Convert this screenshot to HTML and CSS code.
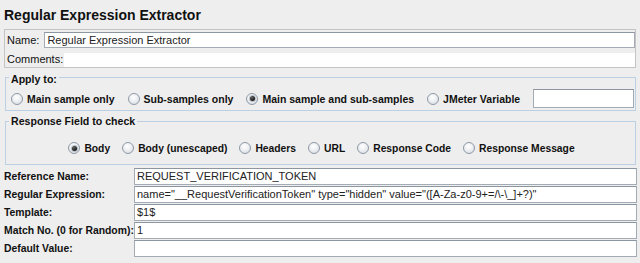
FILE: index.html
```html
<!DOCTYPE html>
<html>
<head>
<meta charset="utf-8">
<link rel="stylesheet" href="styles.css">
</head>
<body>
<div class="title">Regular Expression Extractor</div>
<div class="nc">
  <div class="row name"><span class="lbl">Name:</span><div class="field">Regular Expression Extractor</div></div>
  <div class="row comments"><span class="lbl">Comments:</span><div class="area"></div></div>
</div>
<fieldset class="group apply">
  <legend>Apply to:</legend>
  <div class="radios">
    <label class="rb"><i></i>Main sample only</label>
    <label class="rb"><i></i>Sub-samples only</label>
    <label class="rb"><i class="on"></i>Main sample and sub-samples</label>
    <label class="rb"><i></i>JMeter Variable</label>
    <div class="field var"></div>
  </div>
</fieldset>
<fieldset class="group resp">
  <legend>Response Field to check</legend>
  <div class="radios center">
    <label class="rb"><i class="on"></i>Body</label>
    <label class="rb"><i></i>Body (unescaped)</label>
    <label class="rb"><i></i>Headers</label>
    <label class="rb"><i></i>URL</label>
    <label class="rb"><i></i>Response Code</label>
    <label class="rb"><i></i>Response Message</label>
  </div>
</fieldset>
<div class="form">
  <span class="flbl">Reference Name:</span><div class="field">REQUEST_VERIFICATION_TOKEN</div>
  <span class="flbl">Regular Expression:</span><div class="field">name="__RequestVerificationToken" type="hidden" value="([A-Za-z0-9+=/\-\_]+?)"</div>
  <span class="flbl">Template:</span><div class="field">$1$</div>
  <span class="flbl">Match No. (0 for Random):</span><div class="field">1</div>
  <span class="flbl">Default Value:</span><div class="field"></div>
</div>
</body>
</html>
```
FILE: styles.css
```css
* { box-sizing: border-box; }
html, body { margin: 0; padding: 0; }
body {
  background: #eeeeee;
  width: 640px;
  height: 263px;
  overflow: hidden;
  font-family: "Liberation Sans", Arial, sans-serif;
  color: #111;
}
.title {
  font-weight: bold;
  font-size: 14px;
  line-height: 18px;
  height: 29px;
  padding: 6px 0 0 4px;
  color: #111;
}
.nc {
  margin: 0 4px;
  border: 1px solid #c4c4c4;
}
.row { display: flex; }
.lbl { font-size: 11px; white-space: nowrap; }
.name { height: 20px; padding-top: 2px; padding-left: 1px; }
.name .lbl { line-height: 16px; padding-left: 1px; }
.name .field { margin-left: 5px; height: 16px; }
.comments { height: 17px; padding-left: 2px; }
.comments .lbl { line-height: 18px; }
.comments .area { flex: 1; margin-top: 3px; height: 14px; background: #fff; margin-left: 1px; }
.field {
  flex: 1;
  background: #fff;
  border: 1px solid #a3abb5;
  border-top-color: #8c96a1;
  font-size: 11px;
  line-height: 15px;
  padding-left: 2px;
  color: #222;
  white-space: nowrap;
  overflow: hidden;
}
.group {
  margin: 0 4px 0 5px;
  padding: 0;
  border: 1px solid #bcd0e4;
  min-width: 0;
}
.group legend {
  margin-left: 3px;
  padding: 0 2px;
  font-weight: bold;
  font-size: 10.6px;
  line-height: 13px;
}
.apply legend { padding-top: 5px; }
.apply .radios { height: 21px; margin: 2px 0 1px; padding-left: 5px; gap: 13px; }
.apply .rb { font-size: 10.5px; }
.resp { margin-top: 3px; }
.resp legend { padding-top: 1px; }
.resp .radios { height: 22px; margin: 9px 0 5px; }
.radios { display: flex; align-items: center; gap: 12px; }
.radios.center { justify-content: center; gap: 12px; padding-left: 2px; }
.rb {
  display: flex;
  align-items: center;
  gap: 4px;
  font-weight: bold;
  font-size: 10.3px;
  white-space: nowrap;
  color: #111;
}
.rb i {
  display: grid;
  place-items: center;
  width: 12px;
  height: 12px;
  border: 1px solid #8f9aa6;
  border-radius: 50%;
  background: radial-gradient(circle at 45% 35%, #ffffff 0%, #eef0f3 45%, #cfd5db 100%);
}
.rb i.on::after {
  content: "";
  width: 5px;
  height: 5px;
  border-radius: 50%;
  background: radial-gradient(circle at 40% 35%, #666 0%, #111 70%);
  box-shadow: 0 0 0 1px #b8c0c8;
}
.field.var { flex: 0 0 101px; height: 19px; margin-left: auto; margin-right: 1px; }
.form {
  display: grid;
  grid-template-columns: 130px 1fr;
  grid-auto-rows: 17px;
  row-gap: 1px;
  margin: 3px 3px 0 4px;
}
.flbl {
  font-weight: bold;
  font-size: 10.4px;
  line-height: 17px;
  white-space: nowrap;
  color: #111;
  position: relative;
  z-index: 1;
}
.form .field { line-height: 15px; }
```
